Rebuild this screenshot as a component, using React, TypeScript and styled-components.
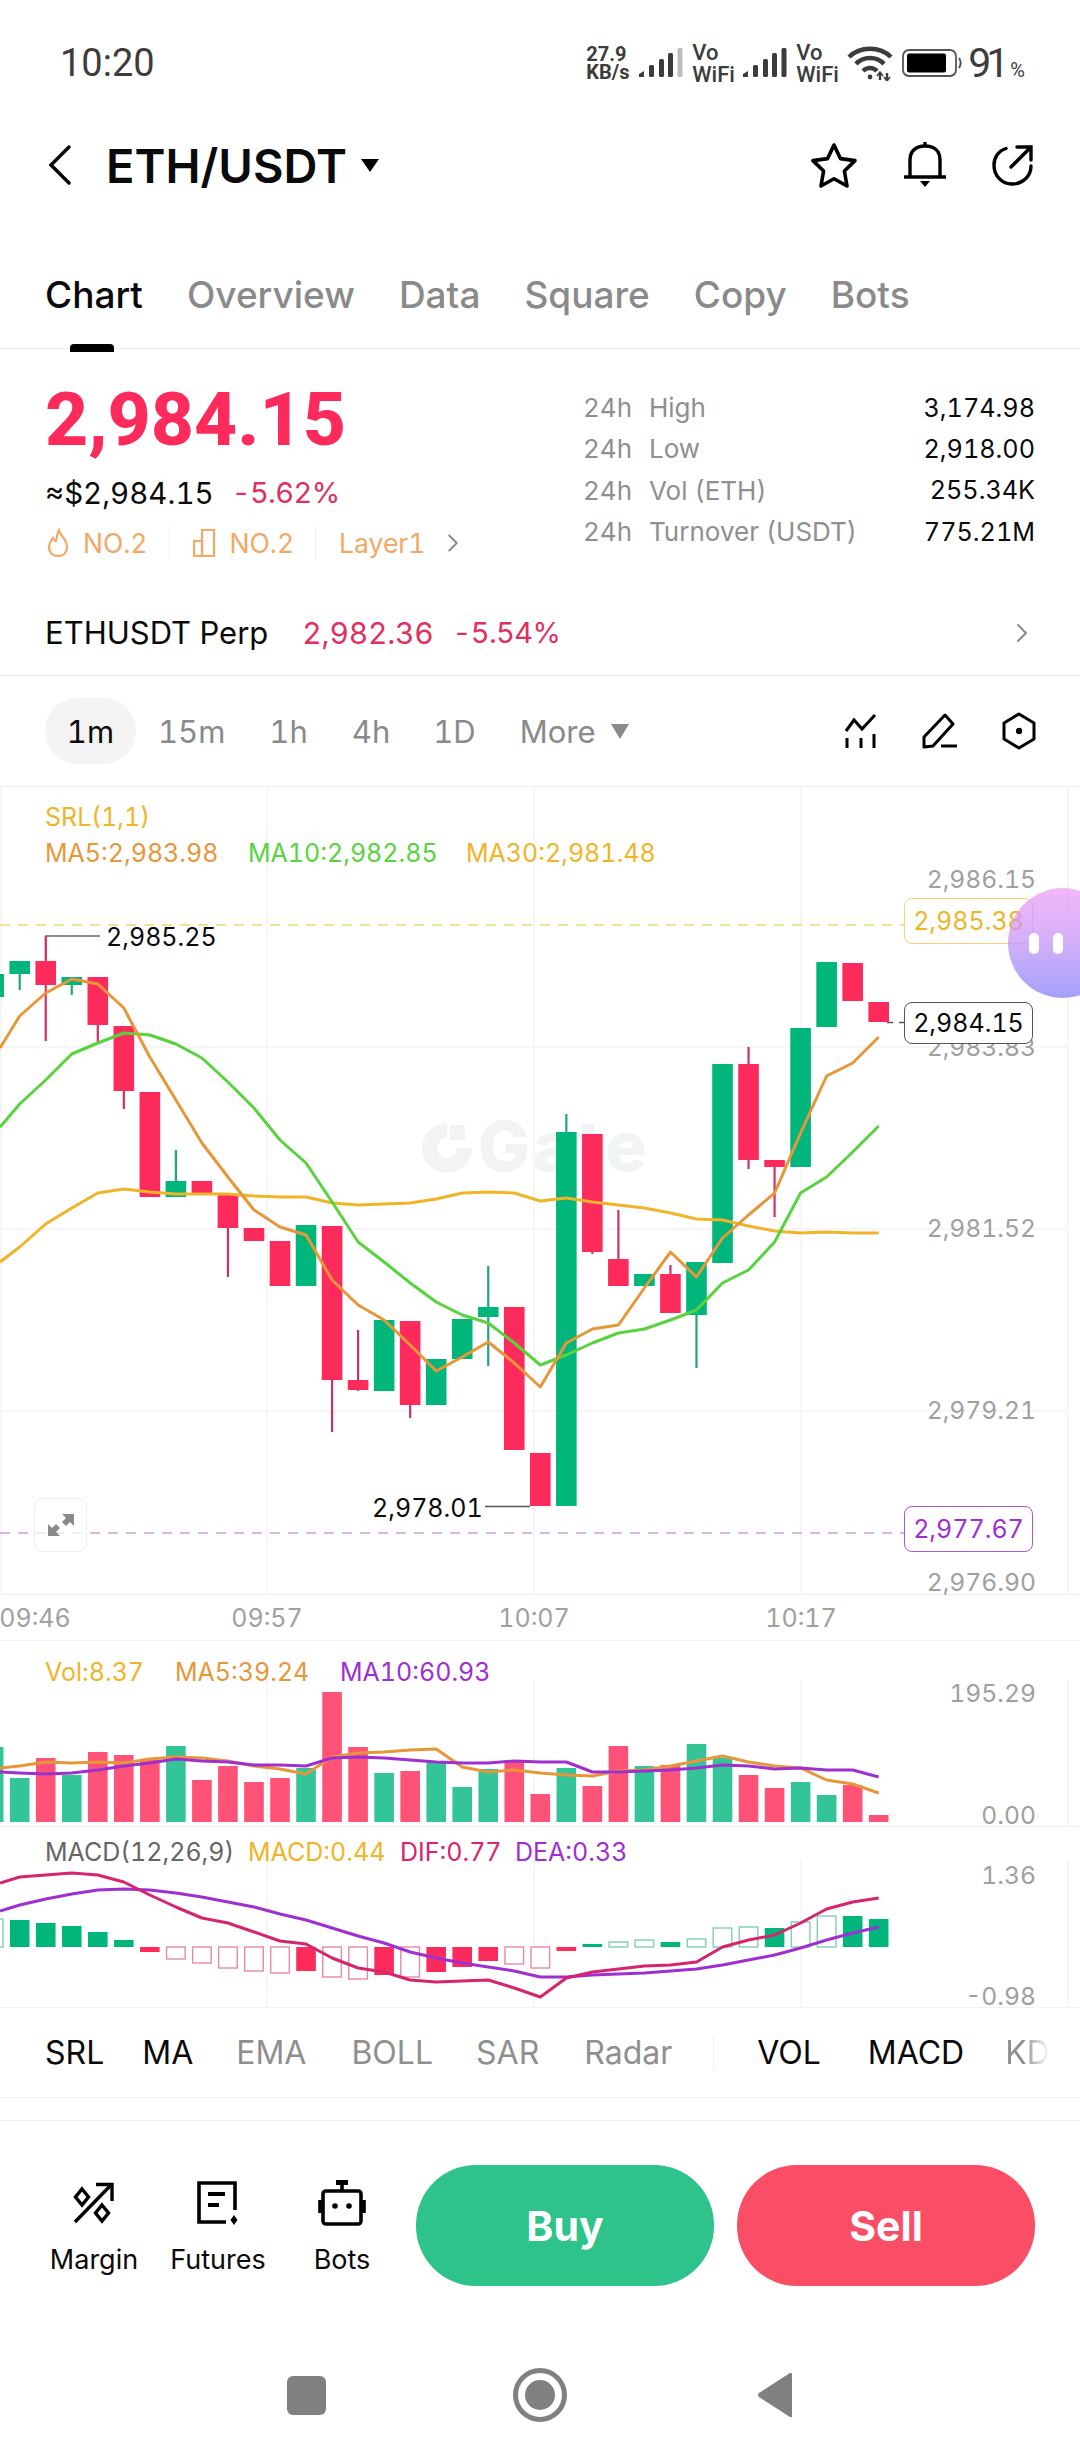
import React from "react";
import styled, { createGlobalStyle } from "styled-components";
import { ChevronRight } from "lucide-react";

const RED = "#fd2b5b";
const GREEN = "#00b67a";
const ORANGE = "#e8963a";
const YELLOW = "#f0b429";
const LIME = "#58d33e";
const PURPLE = "#a02fd0";
const PINK = "#d6246e";

const cx = (i: number) => 19.7 + 26.03 * i;

// [index, kind, bodyTop, bodyBottom, wickTop, wickBottom]
const candles: [number, "r" | "g", number, number, number?, number?][] = [
  [-1, "g", 974, 997],
  [0, "g", 961, 974, 961, 990],
  [1, "r", 961, 985, 936, 1041],
  [2, "g", 977, 985, 977, 995],
  [3, "r", 977, 1025, 977, 1043],
  [4, "r", 1026, 1091, 1026, 1109],
  [5, "r", 1092, 1197],
  [6, "g", 1181, 1197, 1150, 1197],
  [7, "r", 1181, 1194],
  [8, "r", 1195, 1228, 1195, 1277],
  [9, "r", 1228, 1241],
  [10, "r", 1241, 1286],
  [11, "g", 1225, 1286],
  [12, "r", 1226, 1380, 1226, 1432],
  [13, "r", 1380, 1390, 1330, 1391],
  [14, "g", 1320, 1391],
  [15, "r", 1321, 1405, 1321, 1418],
  [16, "g", 1359, 1405],
  [17, "g", 1319, 1359],
  [18, "g", 1307, 1317, 1266, 1366],
  [19, "r", 1307, 1450],
  [20, "r", 1453, 1506],
  [21, "g", 1132, 1506, 1114, 1506],
  [22, "r", 1134, 1252, 1134, 1254],
  [23, "r", 1259, 1286, 1210, 1286],
  [24, "g", 1274, 1286],
  [25, "r", 1274, 1313, 1265, 1313],
  [26, "g", 1262, 1315, 1262, 1368],
  [27, "g", 1064, 1263],
  [28, "r", 1064, 1160, 1047, 1169],
  [29, "r", 1160, 1167, 1160, 1217],
  [30, "g", 1028, 1167],
  [31, "g", 962, 1027],
  [32, "r", 963, 1001],
  [33, "r", 1002, 1022],
];

// first value sits at x=0, the rest on candles 0..33
const ma5 = [1048, 1016, 993, 979, 984, 1008, 1057, 1100, 1143, 1177, 1210, 1227, 1235, 1280, 1305, 1320, 1345, 1371, 1357, 1342, 1363, 1387, 1343, 1329, 1325, 1288, 1252, 1277, 1238, 1215, 1193, 1133, 1076, 1063, 1037];
const ma10 = [1127, 1104, 1080, 1054, 1043, 1033, 1035, 1044, 1058, 1082, 1108, 1140, 1163, 1202, 1242, 1262, 1283, 1302, 1315, 1323, 1343, 1365, 1355, 1343, 1333, 1329, 1320, 1310, 1283, 1270, 1242, 1193, 1177, 1152, 1126];
const ma30 = [1262, 1247, 1224, 1208, 1193, 1189, 1192, 1194, 1194, 1194, 1196, 1197, 1197, 1203, 1205, 1204, 1203, 1199, 1193, 1192, 1193, 1201, 1198, 1202, 1205, 1208, 1213, 1219, 1220, 1226, 1231, 1233, 1232, 1233, 1233];

const volBars: ["r" | "g", number][] = [
  ["g", 1747], ["g", 1778], ["r", 1758], ["g", 1775], ["r", 1752], ["r", 1755], ["r", 1760], ["g", 1746], ["r", 1780], ["r", 1766], ["r", 1782], ["r", 1778], ["g", 1768], ["r", 1692], ["r", 1747], ["g", 1773], ["r", 1771], ["g", 1762], ["g", 1787], ["g", 1769], ["r", 1762], ["r", 1794], ["g", 1768], ["r", 1786], ["r", 1746], ["g", 1766], ["r", 1765], ["g", 1744], ["g", 1758], ["r", 1775], ["r", 1788], ["g", 1782], ["g", 1795], ["r", 1785], ["r", 1815],
];
const volMa5 = [1768, 1766, 1762, 1763, 1762, 1763, 1759, 1757, 1758, 1761, 1766, 1769, 1774, 1757, 1753, 1752, 1750, 1749, 1767, 1772, 1770, 1773, 1775, 1776, 1771, 1770, 1766, 1761, 1756, 1762, 1766, 1768, 1780, 1784, 1793];
const volMa10 = [1772, 1773, 1774, 1773, 1770, 1766, 1763, 1759, 1761, 1762, 1765, 1765, 1766, 1758, 1757, 1758, 1760, 1762, 1763, 1763, 1761, 1762, 1762, 1772, 1772, 1771, 1770, 1768, 1765, 1766, 1769, 1768, 1770, 1770, 1777];

const ZERO = 1947;
// [kind, hollow, end of the bar away from the zero line]
const macdBars: ["r" | "g", boolean, number][] = [
  ["g", true, 1919], ["g", false, 1920], ["g", false, 1923], ["g", false, 1926], ["g", false, 1932], ["g", false, 1940], ["r", false, 1952], ["r", true, 1959], ["r", true, 1963], ["r", true, 1968], ["r", true, 1971], ["r", true, 1973], ["r", false, 1971], ["r", true, 1977], ["r", true, 1979], ["r", false, 1975], ["r", true, 1977], ["r", false, 1972], ["r", false, 1967], ["r", false, 1961], ["r", true, 1964], ["r", true, 1968], ["r", false, 1951], ["g", false, 1944], ["g", true, 1942], ["g", true, 1940], ["g", false, 1942], ["g", true, 1939], ["g", true, 1928], ["g", true, 1927], ["g", false, 1928], ["g", true, 1922], ["g", true, 1916], ["g", false, 1916], ["g", false, 1919],
];
const dif = [1883, 1877, 1875, 1873, 1875, 1882, 1895, 1907, 1918, 1923, 1932, 1941, 1944, 1958, 1968, 1972, 1980, 1982, 1981, 1980, 1988, 1997, 1978, 1972, 1969, 1966, 1965, 1962, 1947, 1940, 1935, 1923, 1909, 1902, 1898];
const dea = [1911, 1905, 1899, 1894, 1890, 1889, 1890, 1893, 1897, 1902, 1907, 1914, 1920, 1928, 1936, 1943, 1952, 1958, 1963, 1967, 1971, 1977, 1977, 1975, 1974, 1973, 1971, 1969, 1965, 1960, 1955, 1948, 1940, 1933, 1927];

const points = (ys: number[]) =>
  ys.map((y, n) => `${n === 0 ? 0 : cx(n - 1).toFixed(1)},${y}`).join(" ");

const Trace = ({ ys, color }: { ys: number[]; color: string }) => (
  <polyline points={points(ys)} fill="none" stroke={color} strokeWidth="3" strokeLinejoin="round" />
);

const GridV = ({ from, to }: { from: number; to: number }) => (
  <>
    {[267, 534, 801, 1068].map((x) => (
      <line key={x} x1={x} x2={x} y1={from} y2={to} stroke="#f3f3f5" strokeWidth="1.5" />
    ))}
  </>
);

const SignalIcon = ({ dim }: { dim?: boolean }) => (
  <svg width="44" height="30" viewBox="0 0 44 30">
    <path d="M0 26 L5 23 V29 H0Z" fill="#3c3c3c" />
    <rect x="10" y="17" width="5" height="12" rx="1.5" fill="#3c3c3c" />
    <rect x="20" y="11" width="5" height="18" rx="1.5" fill="#3c3c3c" />
    <rect x="29" y="5" width="5" height="24" rx="1.5" fill="#3c3c3c" />
    <rect x="38.5" y="0" width="5" height="29" rx="1.5" fill={dim ? "#bdbdbd" : "#3c3c3c"} />
  </svg>
);

const WifiIcon = () => (
  <svg width="46" height="36" viewBox="0 0 46 36" fill="none" stroke="#3c3c3c" strokeWidth="4.4">
    <path d="M2 12 C13 1 33 1 44 12" />
    <path d="M9 19 C16 11 30 11 37 19" />
    <path d="M16 26 C20 22 26 22 30 26" />
    <circle cx="23" cy="32" r="2.4" fill="#3c3c3c" stroke="none" />
    <path d="M33 28 V35 M40 28 V35" strokeWidth="2.4" />
    <path d="M30 31 L33 27 L36 31 M37 32 L40 36 L43 32" strokeWidth="1.6" />
  </svg>
);

const BatteryIcon = () => (
  <svg width="60" height="28" viewBox="0 0 60 28">
    <rect x="1" y="1" width="53" height="26" rx="6" fill="none" stroke="#555" strokeWidth="1.8" />
    <rect x="5" y="4.5" width="39" height="19" rx="2" fill="#000" />
    <path d="M57 9 C59 12 59 16 57 19" fill="none" stroke="#555" strokeWidth="2" />
  </svg>
);

const BackIcon = () => (
  <svg width="24" height="40" viewBox="0 0 24 40" fill="none" stroke="#000" strokeWidth="3.4" strokeLinecap="round">
    <path d="M21 2 L3 20 L21 38" />
  </svg>
);

const StarIcon = () => (
  <svg width="48" height="46" viewBox="0 0 48 46" fill="none" stroke="#000" strokeWidth="3.6" strokeLinejoin="round">
    <path d="M24 3 L30.4 16.6 L45 18.6 L34.4 29 L37 44 L24 36.8 L11 44 L13.6 29 L3 18.6 L17.6 16.6 Z" />
  </svg>
);

const BellIcon = () => (
  <svg width="44" height="46" viewBox="0 0 44 46" fill="none" stroke="#000" strokeWidth="3.4">
    <path d="M1 35 H43" />
    <path d="M7 35 V18 C7 9 13 4 22 4 C31 4 37 9 37 18 V35" />
    <path d="M22 0 V4" />
    <path d="M17 39 H27 L22 45 Z" fill="#000" stroke="none" />
  </svg>
);

const ShareIcon = () => (
  <svg width="42" height="42" viewBox="0 0 42 42" fill="none" stroke="#000" strokeWidth="3.4" strokeLinecap="round">
    <path d="M14 4.5 C6 7 2 14 2 21 C2 32 10 40 20 40 C31 40 39 32 39 22" />
    <path d="M19 23 L38 4" />
    <path d="M25 3 H39 V16" />
  </svg>
);

const FlameIcon = () => (
  <svg width="22" height="30" viewBox="0 0 22 30" fill="none" stroke="#f3a866" strokeWidth="2.2">
    <path d="M12 2 C13 8 20 11 20 19 C20 25 16 28 11 28 C6 28 2 25 2 19 C2 15 4 13 6 10 C7 12 8 13 9 13 C10 9 10 5 12 2 Z" />
  </svg>
);

const RankIcon = () => (
  <svg width="23" height="30" viewBox="0 0 23 30" fill="none" stroke="#f3a866" strokeWidth="2.2">
    <path d="M1 28 V13 H9 V28 Z" />
    <path d="M9 28 V2 H21 V28 H9" />
  </svg>
);

const TrendIcon = () => (
  <svg width="34" height="34" viewBox="0 0 34 34" fill="none" stroke="#000" strokeWidth="3">
    <path d="M2 17 L10 6 L18 15 L31 1" />
    <path d="M3 24 V34 M17 24 V34 M30 20 V34" />
  </svg>
);

const PencilIcon = () => (
  <svg width="36" height="36" viewBox="0 0 36 36" fill="none" stroke="#000" strokeWidth="3" strokeLinejoin="round">
    <path d="M23 2 L31 11 L11 33 L2 34 L2 24 Z" />
    <path d="M19 33 H35" />
  </svg>
);

const HexIcon = () => (
  <svg width="34" height="38" viewBox="0 0 34 38" fill="none" stroke="#000" strokeWidth="3" strokeLinejoin="round">
    <path d="M17 2 L32 11 V27 L17 36 L2 27 V11 Z" />
    <circle cx="17" cy="19" r="3.2" fill="#000" stroke="none" />
  </svg>
);

const ExpandIcon = () => (
  <svg width="28" height="28" viewBox="0 0 28 28" fill="#8a8a8a">
    <path d="M15 3 H27 V15 L23 11 L19 15 L15 11 L19 7 Z" />
    <path d="M13 25 H1 V13 L5 17 L9 13 L13 17 L9 21 Z" />
  </svg>
);

const MarginIcon = () => (
  <svg width="44" height="44" viewBox="0 0 44 44" fill="none" stroke="#000" strokeWidth="3.4">
    <path d="M3 41 L39 4" />
    <path d="M24 3.5 H40 V20" />
    <path d="M10 8 L16.5 16 L10 24 L3.5 16 Z" />
    <path d="M30 24 L36.5 32 L30 40 L23.5 32 Z" />
  </svg>
);

const FuturesIcon = () => (
  <svg width="44" height="46" viewBox="0 0 44 46" fill="none" stroke="#000" strokeWidth="3.6">
    <path d="M39 30 V3 H3 V42 H30" />
    <path d="M12 14 H29 M12 25 H23" strokeWidth="4" />
    <path d="M38 35 L41.5 40 L38 45 L34.5 40 Z" fill="#000" stroke="none" />
  </svg>
);

const BotsIcon = () => (
  <svg width="48" height="46" viewBox="0 0 48 46" fill="none" stroke="#000" strokeWidth="3.6">
    <rect x="18" y="0" width="12" height="5" fill="#000" stroke="none" />
    <path d="M24 4 V10" />
    <rect x="5" y="11" width="38" height="33" rx="3" />
    <path d="M2 20 V33 M46 20 V33" />
    <circle cx="17" cy="26" r="2.8" fill="#000" stroke="none" />
    <circle cx="31" cy="26" r="2.8" fill="#000" stroke="none" />
  </svg>
);

const Global = createGlobalStyle`
  * { box-sizing: border-box; }
  html, body { margin: 0; padding: 0; background: #fff; }
  body {
    font-family: Inter, "Liberation Sans", sans-serif;
    font-variant-numeric: tabular-nums;
    color: #0a0a0a;
  }
`;

const Page = styled.div`
  width: 1080px;
  height: 2460px;
  overflow: hidden;
  background: #fff;
`;

const StatusBar = styled.div`
  height: 126px;
  padding: 0 55px 0 60px;
  display: flex;
  align-items: center;
  justify-content: space-between;
`;
const Clock = styled.span`
  font: 400 38px Roboto, sans-serif;
  color: #3c3c3c;
`;
const StatusRight = styled.div`
  display: flex;
  align-items: center;
  gap: 9px;
  color: #3c3c3c;
`;
const Speed = styled.div`
  font: 700 20px/18px Roboto, sans-serif;
  width: 44px;
`;
const VoWifi = styled.div`
  font: 500 22px/22px Roboto, sans-serif;
  width: 42px;
  margin-top: 2px;
`;
const BatteryText = styled.span`
  font: 400 41px Roboto, sans-serif;
  letter-spacing: -5px;
  white-space: nowrap;
  margin-left: -3px;
`;
const Percent = styled.span`
  font-size: 20px;
  letter-spacing: 0;
  margin-left: 6px;
`;

const Header = styled.div`
  height: 78px;
  padding: 0 46px 0 48px;
  display: flex;
  align-items: center;
`;
const Title = styled.h1`
  margin: 0 14px 0 34px;
  font-size: 47px;
  font-weight: 600;
`;
const Caret = styled.span<{ $w: number; $h: number; $color: string }>`
  width: 0;
  height: 0;
  border-left: ${(p) => p.$w / 2}px solid transparent;
  border-right: ${(p) => p.$w / 2}px solid transparent;
  border-top: ${(p) => p.$h}px solid ${(p) => p.$color};
`;
const HeaderIcons = styled.div`
  margin-left: auto;
  display: flex;
  align-items: center;
  gap: 45px;
`;

const Tabs = styled.div`
  position: relative;
  height: 145px;
  padding: 69px 0 0 45px;
  display: flex;
  gap: 44px;
  border-bottom: 1.5px solid #eeeeee;
`;
const Tab = styled.span<{ $active?: boolean }>`
  position: relative;
  font-size: 37px;
  line-height: 44px;
  height: 44px;
  font-weight: 500;
  color: ${(p) => (p.$active ? "#0a0a0a" : "#8a8a8a")};
`;
const TabMark = styled.span`
  position: absolute;
  left: 25px;
  top: 71px;
  width: 44px;
  height: 8px;
  border-radius: 4px 4px 0 0;
  background: #000;
`;

const Summary = styled.div`
  height: 251px;
  padding: 25px 45px 0;
  display: flex;
  justify-content: space-between;
`;
const Price = styled.div`
  font: 800 75px/90px Roboto, sans-serif;
  color: ${RED};
`;
const SubPrice = styled.div`
  margin-top: 9px;
  display: flex;
  gap: 18px;
  font-size: 29.5px;
  line-height: 40px;
`;
const Change = styled.span`
  color: #e0305f;
  font-size: 29px;
  letter-spacing: -0.6px;
`;
const Badges = styled.div`
  margin-top: 10px;
  height: 40px;
  padding-left: 2px;
  display: flex;
  align-items: center;
  font-size: 26.5px;
  color: #f3a866;
`;
const Badge = styled.span`
  display: flex;
  align-items: center;
  gap: 14px;
  padding-right: 21px;
  margin-right: 23px;
  border-right: 1px solid #f1f1f1;
  height: 34px;
`;
const Stats = styled.div`
  width: 452px;
  padding-top: 13px;
`;
const StatRow = styled.div`
  height: 41.3px;
  display: flex;
  align-items: center;
  font-size: 26px;
  color: #8f8f8f;
`;
const StatKey = styled.span`
  width: 66px;
`;
const StatValue = styled.span`
  margin-left: auto;
  font-size: 25.2px;
  color: #0a0a0a;
`;

const PerpRow = styled.div`
  height: 76px;
  padding: 0 42px 10px 45px;
  display: flex;
  align-items: center;
  font-size: 31px;
  border-bottom: 1.5px solid #eeeeee;
`;
const PerpPrice = styled.span`
  margin-left: 34px;
  font-size: 30px;
  letter-spacing: -0.2px;
  color: #e0305f;
`;
const PerpChange = styled(Change)`
  margin-left: 19px;
`;
const PerpArrow = styled.span`
  margin-left: auto;
  display: flex;
  color: #8a8a8a;
`;

const Frames = styled.div`
  height: 111px;
  padding: 0 44px 0 45px;
  display: flex;
  align-items: center;
  font-size: 31px;
  color: #8a8a8a;
  border-bottom: 1.5px solid #eeeeee;
`;
const Frame = styled.span<{ $active?: boolean; $gap?: number }>`
  margin-left: ${(p) => p.$gap ?? 0}px;
  ${(p) =>
    p.$active
      ? `
    width: 91px;
    height: 66px;
    border-radius: 33px;
    background: #f4f4f4;
    color: #0a0a0a;
    display: flex;
    align-items: center;
    justify-content: center;
  `
      : ""}
`;
const FrameMore = styled.span`
  margin-left: 15px;
  display: flex;
`;
const FrameIcons = styled.div`
  margin-left: auto;
  display: flex;
  align-items: center;
  gap: 44px;
`;

const Pane = styled.div<{ $height: number; $top?: number }>`
  position: relative;
  height: ${(p) => p.$height}px;
  padding: ${(p) => p.$top ?? 0}px 45px 0;
  border-bottom: 1.5px solid #f1f1f1;
`;
const PaneSvg = styled.svg`
  position: absolute;
  left: 0;
  top: 0;
`;
const LegendRow = styled.div<{ $mt?: number }>`
  position: relative;
  margin-top: ${(p) => p.$mt ?? 0}px;
  display: flex;
  font-size: 25px;
  line-height: 26px;
`;
const LegendItem = styled.span<{ $color: string; $width?: number }>`
  color: ${(p) => p.$color};
  ${(p) => (p.$width ? `width: ${p.$width}px;` : "")}
`;
const AxisLabel = styled.span<{ $y: number }>`
  position: absolute;
  right: 44px;
  top: ${(p) => p.$y - 10}px;
  font-size: 24.7px;
  line-height: 20px;
  color: #a0a0a0;
`;
const PriceTag = styled.span<{ $y: number; $h: number; $color: string; $border: string }>`
  position: absolute;
  left: 904px;
  top: ${(p) => p.$y}px;
  width: 129px;
  height: ${(p) => p.$h}px;
  display: flex;
  align-items: center;
  justify-content: center;
  font-size: 25px;
  color: ${(p) => p.$color};
  background: #fff;
  border: 1.5px solid ${(p) => p.$border};
  border-radius: 8px;
`;
const Callout = styled.span<{ $x: number; $y: number }>`
  position: absolute;
  left: ${(p) => p.$x}px;
  top: ${(p) => p.$y - 15}px;
  font-size: 25px;
  line-height: 30px;
  color: #0a0a0a;
`;
const FloatBall = styled.div`
  position: absolute;
  left: 1008px;
  top: 101px;
  width: 110px;
  height: 110px;
  border-radius: 50%;
  background: linear-gradient(180deg, rgba(235, 144, 245, 0.65) 0%, rgba(200, 150, 248, 0.75) 45%, rgba(160, 156, 250, 0.95) 100%);
  display: flex;
  align-items: center;
  gap: 14px;
  padding-left: 21px;
`;
const BallEye = styled.span`
  width: 10px;
  height: 21px;
  border-radius: 5px;
  background: #fff;
`;
const ExpandButton = styled.div`
  position: absolute;
  left: 34px;
  top: 711px;
  width: 53px;
  height: 54px;
  border: 1.5px solid #eeeeee;
  border-radius: 9px;
  background: rgba(255, 255, 255, 0.7);
  display: flex;
  align-items: center;
  justify-content: center;
`;

const TimeAxis = styled.div`
  position: relative;
  height: 46px;
  border-bottom: 1.5px solid #f1f1f1;
`;
const TimeLabel = styled.span<{ $x: number }>`
  position: absolute;
  left: ${(p) => p.$x}px;
  top: 8px;
  transform: translateX(-50%);
  font-size: 25px;
  line-height: 30px;
  color: #a0a0a0;
`;

const Indicators = styled.div`
  height: 90px;
  padding-left: 45px;
  display: flex;
  align-items: center;
  font-size: 32px;
  color: #8f8f8f;
  border-bottom: 1.5px solid #f1f1f1;
`;
const Indicator = styled.span<{ $on?: boolean; $left: number; $fade?: boolean }>`
  margin-left: ${(p) => p.$left}px;
  color: ${(p) => (p.$on ? "#0a0a0a" : "#8f8f8f")};
  ${(p) =>
    p.$fade
      ? `
    background: linear-gradient(90deg, #8f8f8f 40%, #ffffff 100%);
    -webkit-background-clip: text;
    background-clip: text;
    color: transparent;
  `
      : ""}
`;
const IndicatorSep = styled.span`
  width: 1px;
  height: 34px;
  margin-left: 41px;
  background: #eeeeee;
`;
const Band = styled.div`
  height: 23px;
  border-bottom: 1.5px solid #eeeeee;
`;

const TradeBar = styled.div`
  height: 209px;
  padding: 44px 45px 0 44px;
  display: flex;
`;
const Tool = styled.div`
  width: 100px;
  margin-right: 24px;
  padding-top: 14px;
  display: flex;
  flex-direction: column;
  align-items: center;
`;
const ToolIcon = styled.div`
  height: 48px;
  display: flex;
  align-items: center;
`;
const ToolLabel = styled.span`
  margin-top: 17px;
  font-size: 27px;
  line-height: 32px;
`;
const TradeButton = styled.button<{ $bg: string }>`
  width: 298px;
  height: 121px;
  border: 0;
  border-radius: 60px;
  background: ${(p) => p.$bg};
  color: #fff;
  font: 700 41px Inter, sans-serif;
  & + & {
    margin-left: 23px;
  }
`;

const NavBar = styled.div`
  height: 130px;
  display: flex;
  align-items: center;
  justify-content: center;
`;
const NavSquare = styled.span`
  width: 39px;
  height: 39px;
  border-radius: 6px;
  background: #808080;
`;
const NavCircle = styled.span`
  width: 54px;
  height: 54px;
  margin-left: 187px;
  margin-right: 190px;
  border-radius: 50%;
  border: 5px solid #808080;
  display: flex;
  align-items: center;
  justify-content: center;
  &::after {
    content: "";
    width: 30px;
    height: 30px;
    border-radius: 50%;
    background: #808080;
  }
`;
const NavBack = () => (
  <svg width="36" height="46" viewBox="0 0 36 46" fill="#808080">
    <path d="M35 2 V44 Q35 46 33 45 L2 25 Q0 23 2 21 L33 1 Q35 0 35 2 Z" />
  </svg>
);

const Watermark = () => (
  <g>
    <path d="M447 1123 A25 25 0 1 0 472 1148 H457 A10 10 0 1 1 447 1138 Z" fill="#f1f3f4" />
    <rect x="450" y="1125" width="15" height="15" fill="#f1f3f4" />
    <text x="478" y="1171" fontFamily="Inter, sans-serif" fontWeight="800" fontSize="69" letterSpacing="3" fill="#f1f3f4">Gate</text>
  </g>
);

export default function App() {
  return (
    <Page>
      <Global />
      <StatusBar>
        <Clock>10:20</Clock>
        <StatusRight>
          <Speed>27.9<br />KB/s</Speed>
          <SignalIcon dim />
          <VoWifi>Vo<br />WiFi</VoWifi>
          <SignalIcon />
          <VoWifi>Vo<br />WiFi</VoWifi>
          <WifiIcon />
          <BatteryIcon />
          <BatteryText>91<Percent>%</Percent></BatteryText>
        </StatusRight>
      </StatusBar>

      <Header>
        <BackIcon />
        <Title>ETH/USDT</Title>
        <Caret $w={18} $h={13} $color="#000" />
        <HeaderIcons>
          <StarIcon />
          <BellIcon />
          <ShareIcon />
        </HeaderIcons>
      </Header>

      <Tabs>
        <Tab $active>Chart<TabMark /></Tab>
        <Tab>Overview</Tab>
        <Tab>Data</Tab>
        <Tab>Square</Tab>
        <Tab>Copy</Tab>
        <Tab>Bots</Tab>
      </Tabs>

      <Summary>
        <div>
          <Price>2,984.15</Price>
          <SubPrice>
            <span>≈$2,984.15</span>
            <Change>-5.62%</Change>
          </SubPrice>
          <Badges>
            <Badge><FlameIcon />NO.2</Badge>
            <Badge><RankIcon />NO.2</Badge>
            <span>Layer1</span>
            <ChevronRight size={30} strokeWidth={1.5} color="#8a8a8a" style={{ marginLeft: 12 }} />
          </Badges>
        </div>
        <Stats>
          <StatRow><StatKey>24h</StatKey>High<StatValue>3,174.98</StatValue></StatRow>
          <StatRow><StatKey>24h</StatKey>Low<StatValue>2,918.00</StatValue></StatRow>
          <StatRow><StatKey>24h</StatKey>Vol (ETH)<StatValue>255.34K</StatValue></StatRow>
          <StatRow><StatKey>24h</StatKey>Turnover (USDT)<StatValue>775.21M</StatValue></StatRow>
        </Stats>
      </Summary>

      <PerpRow>
        <span>ETHUSDT Perp</span>
        <PerpPrice>2,982.36</PerpPrice>
        <PerpChange>-5.54%</PerpChange>
        <PerpArrow><ChevronRight size={32} strokeWidth={1.5} /></PerpArrow>
      </PerpRow>

      <Frames>
        <Frame $active>1m</Frame>
        <Frame $gap={22}>15m</Frame>
        <Frame $gap={44}>1h</Frame>
        <Frame $gap={44}>4h</Frame>
        <Frame $gap={43}>1D</Frame>
        <Frame $gap={44}>More</Frame>
        <FrameMore><Caret $w={18} $h={15} $color="#8a8a8a" /></FrameMore>
        <FrameIcons>
          <TrendIcon />
          <PencilIcon />
          <HexIcon />
        </FrameIcons>
      </Frames>

      <Pane $height={808} $top={17}>
        <PaneSvg width="1080" height="808" viewBox="0 787 1080 808">
          <GridV from={787} to={1595} />
          <line x1="1" x2="1" y1="787" y2="1595" stroke="#f3f3f5" strokeWidth="1.5" />
          {[1047, 1229, 1411].map((y) => (
            <line key={y} x1="0" x2="1068" y1={y} y2={y} stroke="#f3f3f5" strokeWidth="1.5" />
          ))}
          <Watermark />
          <line x1="0" x2="904" y1="925" y2="925" stroke="#f2d675" strokeWidth="1.6" strokeDasharray="10 8" />
          <line x1="0" x2="904" y1="1533" y2="1533" stroke="#cf9de6" strokeWidth="1.6" strokeDasharray="10 8" />
          <path d="M45.8 960 V936 H100" fill="none" stroke="#666" strokeWidth="1.5" />
          <line x1="485" x2="530" y1="1506.5" y2="1506.5" stroke="#555" strokeWidth="1.5" />
          <line x1="887" x2="905" y1="1022.5" y2="1022.5" stroke="#555" strokeWidth="1.5" strokeDasharray="6 6" />
          {candles.map(([i, kind, top, bottom, wt, wb]) => {
            const fill = kind === "r" ? RED : GREEN;
            return (
              <g key={i}>
                {wt !== undefined && (
                  <line x1={cx(i)} x2={cx(i)} y1={wt} y2={wb} stroke={kind === "r" ? "#cf3068" : "#1fa67f"} strokeWidth="2.2" />
                )}
                <rect x={cx(i) - 10.3} y={top} width="20.6" height={bottom - top} fill={fill} />
              </g>
            );
          })}
          <Trace ys={ma30} color={YELLOW} />
          <Trace ys={ma10} color={LIME} />
          <Trace ys={ma5} color={ORANGE} />
        </PaneSvg>
        <LegendRow><LegendItem $color={YELLOW}>SRL(1,1)</LegendItem></LegendRow>
        <LegendRow $mt={10}>
          <LegendItem $color={ORANGE} $width={203}>MA5:2,983.98</LegendItem>
          <LegendItem $color={LIME} $width={218}>MA10:2,982.85</LegendItem>
          <LegendItem $color={YELLOW}>MA30:2,981.48</LegendItem>
        </LegendRow>
        <AxisLabel $y={92}>2,986.15</AxisLabel>
        <AxisLabel $y={260}>2,983.83</AxisLabel>
        <AxisLabel $y={441}>2,981.52</AxisLabel>
        <AxisLabel $y={623}>2,979.21</AxisLabel>
        <AxisLabel $y={795}>2,976.90</AxisLabel>
        <PriceTag $y={111} $h={46} $color={YELLOW} $border="#f2d675">2,985.38</PriceTag>
        <PriceTag $y={215} $h={42} $color="#0a0a0a" $border="#555">2,984.15</PriceTag>
        <PriceTag $y={719} $h={46} $color={PURPLE} $border="#a85ac8">2,977.67</PriceTag>
        <Callout $x={106} $y={150}>2,985.25</Callout>
        <Callout $x={372} $y={721}>2,978.01</Callout>
        <FloatBall><BallEye /><BallEye /></FloatBall>
        <ExpandButton><ExpandIcon /></ExpandButton>
      </Pane>

      <TimeAxis>
        <TimeLabel $x={35}>09:46</TimeLabel>
        <TimeLabel $x={267}>09:57</TimeLabel>
        <TimeLabel $x={534}>10:07</TimeLabel>
        <TimeLabel $x={801}>10:17</TimeLabel>
      </TimeAxis>

      <Pane $height={186} $top={18}>
        <PaneSvg width="1080" height="186" viewBox="0 1641 1080 186">
          <GridV from={1680} to={1827} />
          {volBars.map(([kind, top], n) => (
            <rect key={n} x={cx(n - 1) - 9.8} y={top} width="19.6" height={1822 - top} fill={kind === "r" ? "#ff5277" : "#33c598"} />
          ))}
          <Trace ys={volMa5} color={ORANGE} />
          <Trace ys={volMa10} color={PURPLE} />
        </PaneSvg>
        <LegendRow>
          <LegendItem $color={YELLOW} $width={130}>Vol:8.37</LegendItem>
          <LegendItem $color={ORANGE} $width={165}>MA5:39.24</LegendItem>
          <LegendItem $color={PURPLE}>MA10:60.93</LegendItem>
        </LegendRow>
        <AxisLabel $y={52}>195.29</AxisLabel>
        <AxisLabel $y={174}>0.00</AxisLabel>
      </Pane>

      <Pane $height={181} $top={12}>
        <PaneSvg width="1080" height="181" viewBox="0 1827 1080 181">
          <GridV from={1860} to={2008} />
          {macdBars.map(([kind, hollow, end], n) => {
            const top = Math.min(end, ZERO);
            const h = Math.abs(end - ZERO);
            const c = kind === "r" ? RED : GREEN;
            return hollow ? (
              <rect key={n} x={cx(n - 1) - 9.3} y={top} width="18.6" height={h} fill="#fff" stroke={kind === "r" ? "#e58aa3" : "#7fcfb4"} strokeWidth="1.4" />
            ) : (
              <rect key={n} x={cx(n - 1) - 9.8} y={top} width="19.6" height={h} fill={c} />
            );
          })}
          <Trace ys={dea} color={PURPLE} />
          <Trace ys={dif} color={PINK} />
        </PaneSvg>
        <LegendRow>
          <LegendItem $color="#666" $width={203}>MACD(12,26,9)</LegendItem>
          <LegendItem $color={YELLOW} $width={152}>MACD:0.44</LegendItem>
          <LegendItem $color={PINK} $width={115}>DIF:0.77</LegendItem>
          <LegendItem $color={PURPLE}>DEA:0.33</LegendItem>
        </LegendRow>
        <AxisLabel $y={48}>1.36</AxisLabel>
        <AxisLabel $y={169}>-0.98</AxisLabel>
      </Pane>

      <Indicators>
        <Indicator $on $left={0}>SRL</Indicator>
        <Indicator $on $left={38}>MA</Indicator>
        <Indicator $left={43}>EMA</Indicator>
        <Indicator $left={45}>BOLL</Indicator>
        <Indicator $left={43}>SAR</Indicator>
        <Indicator $left={45}>Radar</Indicator>
        <IndicatorSep />
        <Indicator $on $left={43}>VOL</Indicator>
        <Indicator $on $left={47}>MACD</Indicator>
        <Indicator $fade $left={41}>KD</Indicator>
      </Indicators>
      <Band />

      <TradeBar>
        <Tool><ToolIcon><MarginIcon /></ToolIcon><ToolLabel>Margin</ToolLabel></Tool>
        <Tool><ToolIcon><FuturesIcon /></ToolIcon><ToolLabel>Futures</ToolLabel></Tool>
        <Tool><ToolIcon><BotsIcon /></ToolIcon><ToolLabel>Bots</ToolLabel></Tool>
        <TradeButton $bg="#2dc38a">Buy</TradeButton>
        <TradeButton $bg="#f94e65">Sell</TradeButton>
      </TradeBar>

      <NavBar>
        <NavSquare />
        <NavCircle />
        <NavBack />
      </NavBar>
    </Page>
  );
}
